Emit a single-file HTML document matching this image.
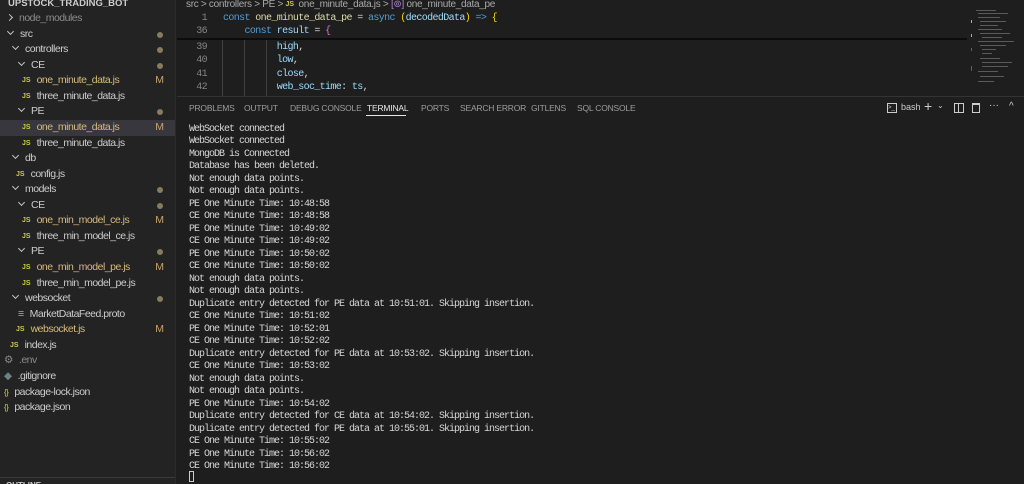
<!DOCTYPE html>
<html><head><meta charset="utf-8"><style>
*{margin:0;padding:0;box-sizing:border-box}
html,body{width:1024px;height:484px;overflow:hidden}
body{background:#1e1e1e;font-family:"Liberation Sans",sans-serif;color:#ccc;position:relative}
#side{position:absolute;left:0;top:0;width:176px;height:484px;background:#232323;border-right:1px solid #2b2b2b;overflow:hidden}
.r{position:absolute;left:0;width:175px;height:15.5px;font-size:10.5px;letter-spacing:-0.5px;line-height:15.5px;white-space:nowrap;color:#cccccc}
.r .m{position:absolute;right:11px;top:0;color:#c9a26d;font-size:10.5px;letter-spacing:0}
.r .d{position:absolute;right:12px;top:5px;width:6px;height:6px;border-radius:3px;background:#8a7a5e}
.js{color:#cbcb41;font-weight:bold;font-size:7px;margin-right:6px;vertical-align:1px;letter-spacing:0}
.chev{display:inline-block;width:5px;height:5px;border-right:1px solid #c5c5c5;border-bottom:1px solid #c5c5c5;transform:rotate(45deg);margin:0 7px 3px 1px}
.chr{display:inline-block;width:5px;height:5px;border-right:1px solid #c5c5c5;border-bottom:1px solid #c5c5c5;transform:rotate(-45deg);margin:0 7px 1px 0}
.y{color:#d7ba7d}
#code{position:absolute;left:177px;top:12px;width:790px;font-family:"Liberation Mono",monospace;font-size:10px;letter-spacing:-0.63px;color:#d4d4d4}
.cl{position:absolute;left:0;height:13px;line-height:13px;white-space:pre}
.ln{display:inline-block;width:30px;text-align:right;color:#858585;margin-right:16px}
.k{color:#569cd6}.v{color:#9cdcfe}.f{color:#dcdcaa}.p{color:#ffd700}
#term{position:absolute;left:189px;top:124px;font-family:"Liberation Mono",monospace;font-size:10px;letter-spacing:-1px;line-height:12.48px;color:#d6d6d6;white-space:pre}
.tab{position:absolute;top:103px;font-size:8.5px;color:#9d9d9d;letter-spacing:-0.2px}
</style></head><body>
<div id="side">
<div class="r" style="top:-4px;left:8px;font-weight:bold;font-size:9.5px;letter-spacing:0">UPSTOCK_TRADING_BOT</div>
<div class="r" style="top:11px;padding-left:7px;color:#8b8b8b"><span class="chr"></span>node_modules</div>
<div class="r" style="top:27px;padding-left:7px"><span class="chev"></span>src<span class="d"></span></div>
<div class="r" style="top:42px;padding-left:12px"><span class="chev"></span>controllers<span class="d"></span></div>
<div class="r" style="top:58px;padding-left:18px"><span class="chev"></span>CE<span class="d"></span></div>
<div class="r y" style="top:73px;padding-left:22px"><span class="js">JS</span>one_minute_data.js<span class="m">M</span></div>
<div class="r" style="top:89px;padding-left:22px"><span class="js">JS</span>three_minute_data.js</div>
<div class="r" style="top:104px;padding-left:18px"><span class="chev"></span>PE<span class="d"></span></div>
<div class="r y" style="top:120px;padding-left:22px;background:#37373d"><span class="js">JS</span>one_minute_data.js<span class="m">M</span></div>
<div class="r" style="top:136px;padding-left:22px"><span class="js">JS</span>three_minute_data.js</div>
<div class="r" style="top:151px;padding-left:12px"><span class="chev"></span>db</div>
<div class="r" style="top:167px;padding-left:16px"><span class="js">JS</span>config.js</div>
<div class="r" style="top:182px;padding-left:12px"><span class="chev"></span>models<span class="d"></span></div>
<div class="r" style="top:198px;padding-left:18px"><span class="chev"></span>CE<span class="d"></span></div>
<div class="r y" style="top:213px;padding-left:22px"><span class="js">JS</span>one_min_model_ce.js<span class="m">M</span></div>
<div class="r" style="top:229px;padding-left:22px"><span class="js">JS</span>three_min_model_ce.js</div>
<div class="r" style="top:244px;padding-left:18px"><span class="chev"></span>PE<span class="d"></span></div>
<div class="r y" style="top:260px;padding-left:22px"><span class="js">JS</span>one_min_model_pe.js<span class="m">M</span></div>
<div class="r" style="top:276px;padding-left:22px"><span class="js">JS</span>three_min_model_pe.js</div>
<div class="r" style="top:291px;padding-left:12px"><span class="chev"></span>websocket<span class="d"></span></div>
<div class="r" style="top:307px;padding-left:18px"><span style="color:#aaa;margin-right:6px">≡</span>MarketDataFeed.proto</div>
<div class="r y" style="top:322px;padding-left:16px"><span class="js">JS</span>websocket.js<span class="m">M</span></div>
<div class="r" style="top:338px;padding-left:10px"><span class="js">JS</span>index.js</div>
<div class="r" style="top:353px;padding-left:4px;color:#8b8b8b"><span style="margin-right:6px">⚙</span>.env</div>
<div class="r" style="top:369px;padding-left:4px"><span style="color:#6d8086;margin-right:6px">◆</span>.gitignore</div>
<div class="r" style="top:385px;padding-left:4px"><span style="color:#cbcb41;margin-right:6px;font-size:8px">{}</span>package-lock.json</div>
<div class="r" style="top:400px;padding-left:4px"><span style="color:#cbcb41;margin-right:6px;font-size:8px">{}</span>package.json</div>
<div style="position:absolute;left:0;top:477px;width:176px;border-top:1px solid #3a3a3a"></div>
<div class="r" style="top:478px;left:6px;font-size:8px;font-weight:bold;letter-spacing:0">OUTLINE</div>
</div>
<div style="position:absolute;left:186px;top:-1px;font-size:10px;letter-spacing:-0.3px;color:#a9a9a9;white-space:nowrap">src &gt; controllers &gt; PE &gt; <span class="js" style="margin-right:2px">JS</span> one_minute_data.js &gt; <span style="color:#b180d7">[⊚]</span> one_minute_data_pe</div>
<div id="code">
<div class="cl" style="top:0"><span class="ln">1</span><span class="k">const</span> <span class="f">one_minute_data_pe</span> = <span class="k">async</span> <span class="p">(</span><span class="v">decodedData</span><span class="p">)</span> <span class="k">=&gt;</span> <span class="p">{</span></div>
<div class="cl" style="top:13px"><span class="ln">36</span>    <span class="k">const</span> <span class="v">result</span> = <span style="color:#da70d6">{</span></div>
<div class="cl" style="top:29px"><span class="ln">39</span>          <span class="v">high</span>,</div>
<div class="cl" style="top:42px"><span class="ln">40</span>          <span class="v">low</span>,</div>
<div class="cl" style="top:56px"><span class="ln">41</span>          <span class="v">close</span>,</div>
<div class="cl" style="top:69px"><span class="ln">42</span>          <span class="v">web_soc_time</span>: <span class="v">ts</span>,</div>
</div>
<div style="position:absolute;left:177px;top:38px;width:790px;height:2px;background:#0c0c0c"></div>
<div style="position:absolute;left:222px;top:40px;width:1px;height:56px;background:#404040"></div>
<div style="position:absolute;left:244px;top:40px;width:1px;height:56px;background:#404040"></div>
<div style="position:absolute;left:266px;top:40px;width:1px;height:56px;background:#404040"></div>
<svg style="position:absolute;left:968px;top:8px" width="52" height="80">
<g fill="#6a6a6a" opacity=".8">
<rect x="8" y="2" width="20" height="1"/><rect x="10" y="5" width="30" height="1"/><rect x="10" y="9" width="22" height="1"/><rect x="12" y="13" width="26" height="1"/><rect x="12" y="17" width="18" height="1"/><rect x="10" y="21" width="24" height="1"/><rect x="12" y="25" width="30" height="1"/><rect x="14" y="29" width="20" height="1"/><rect x="10" y="33" width="36" height="1"/><rect x="12" y="37" width="26" height="1"/><rect x="14" y="41" width="14" height="1"/><rect x="14" y="45" width="10" height="1"/><rect x="12" y="50" width="20" height="1"/><rect x="14" y="54" width="30" height="1"/><rect x="14" y="58" width="26" height="1"/><rect x="10" y="63" width="20" height="1"/><rect x="12" y="68" width="24" height="1"/><rect x="10" y="73" width="16" height="1"/></g>
<rect x="3" y="12" width="1" height="3" fill="#c9a26d"/><rect x="3" y="26" width="1" height="3" fill="#c9a26d"/><rect x="3" y="40" width="1" height="3" fill="#b04040"/><rect x="3" y="58" width="1" height="5" fill="#487e02"/></svg>
<div style="position:absolute;left:177px;top:96px;width:847px;border-top:1px solid #333"></div>
<div class="tab" style="left:189px">PROBLEMS</div>
<div class="tab" style="left:244px">OUTPUT</div>
<div class="tab" style="left:290px">DEBUG CONSOLE</div>
<div class="tab" style="left:367px;color:#e7e7e7">TERMINAL</div>
<div style="position:absolute;left:366px;top:115px;width:40px;height:1px;background:#e7e7e7"></div>
<div class="tab" style="left:421px">PORTS</div>
<div class="tab" style="left:460px">SEARCH ERROR</div>
<div class="tab" style="left:531px">GITLENS</div>
<div class="tab" style="left:577px">SQL CONSOLE</div>
<div style="position:absolute;left:887px;top:103px;width:10px;height:10px;border:1px solid #ccc;font-size:6px;line-height:8px;color:#ccc">&gt;_</div>
<div style="position:absolute;left:901px;top:102px;font-size:9px;color:#ccc">bash</div>
<div style="position:absolute;left:924px;top:98px;font-size:14px;color:#ccc">+</div>
<div style="position:absolute;left:937px;top:101px;font-size:8px;color:#ccc">⌄</div>
<div style="position:absolute;left:954px;top:103px;width:10px;height:10px;border:1px solid #ccc"><div style="position:absolute;left:3px;top:0;width:1px;height:8px;background:#ccc"></div></div>
<div style="position:absolute;left:972px;top:103px;width:8px;height:10px;border:1px solid #ccc;border-top:2px solid #ccc"></div>
<div style="position:absolute;left:989px;top:100px;font-size:10px;color:#ccc">···</div>
<div style="position:absolute;left:1009px;top:101px;font-size:10px;color:#ccc">^</div>
<div id="term">WebSocket connected
WebSocket connected
MongoDB is Connected
Database has been deleted.
Not enough data points.
Not enough data points.
PE One Minute Time: 10:48:58
CE One Minute Time: 10:48:58
PE One Minute Time: 10:49:02
CE One Minute Time: 10:49:02
PE One Minute Time: 10:50:02
CE One Minute Time: 10:50:02
Not enough data points.
Not enough data points.
Duplicate entry detected for PE data at 10:51:01. Skipping insertion.
CE One Minute Time: 10:51:02
PE One Minute Time: 10:52:01
CE One Minute Time: 10:52:02
Duplicate entry detected for PE data at 10:53:02. Skipping insertion.
CE One Minute Time: 10:53:02
Not enough data points.
Not enough data points.
PE One Minute Time: 10:54:02
Duplicate entry detected for CE data at 10:54:02. Skipping insertion.
Duplicate entry detected for PE data at 10:55:01. Skipping insertion.
CE One Minute Time: 10:55:02
PE One Minute Time: 10:56:02
CE One Minute Time: 10:56:02</div>
<div style="position:absolute;left:189px;top:471px;width:5px;height:11px;border:1px solid #ccc"></div>
</body></html>
